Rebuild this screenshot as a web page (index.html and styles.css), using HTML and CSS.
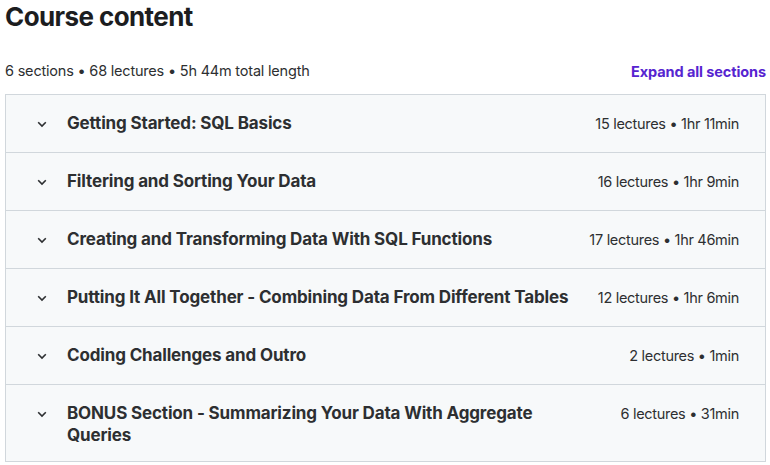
FILE: index.html
```html
<!DOCTYPE html>
<html lang="en">
<head>
<meta charset="utf-8">
<title>Course content</title>
<link rel="stylesheet" href="styles.css">
</head>
<body>
<div class="page">
  <h2 class="heading">Course content</h2>
  <div class="stats">
    <span class="stats-text">6 sections • 68 lectures • 5h 44m total length</span>
    <button class="expand">Expand all sections</button>
  </div>
  <div class="sections">
    <div class="section">
      <span class="chev"><svg width="12" height="12" viewBox="0 0 12 12"><path d="M2.2 4.2 6 8 9.8 4.2" fill="none" stroke="#2d2f31" stroke-width="1.6"/></svg></span>
      <span class="title">Getting Started: SQL Basics</span>
      <span class="meta">15 lectures • 1hr 11min</span>
    </div>
    <div class="section">
      <span class="chev"><svg width="12" height="12" viewBox="0 0 12 12"><path d="M2.2 4.2 6 8 9.8 4.2" fill="none" stroke="#2d2f31" stroke-width="1.6"/></svg></span>
      <span class="title">Filtering and Sorting Your Data</span>
      <span class="meta">16 lectures • 1hr 9min</span>
    </div>
    <div class="section">
      <span class="chev"><svg width="12" height="12" viewBox="0 0 12 12"><path d="M2.2 4.2 6 8 9.8 4.2" fill="none" stroke="#2d2f31" stroke-width="1.6"/></svg></span>
      <span class="title">Creating and Transforming Data With SQL Functions</span>
      <span class="meta">17 lectures • 1hr 46min</span>
    </div>
    <div class="section">
      <span class="chev"><svg width="12" height="12" viewBox="0 0 12 12"><path d="M2.2 4.2 6 8 9.8 4.2" fill="none" stroke="#2d2f31" stroke-width="1.6"/></svg></span>
      <span class="title">Putting It All Together - Combining Data From Different Tables</span>
      <span class="meta">12 lectures • 1hr 6min</span>
    </div>
    <div class="section">
      <span class="chev"><svg width="12" height="12" viewBox="0 0 12 12"><path d="M2.2 4.2 6 8 9.8 4.2" fill="none" stroke="#2d2f31" stroke-width="1.6"/></svg></span>
      <span class="title">Coding Challenges and Outro</span>
      <span class="meta">2 lectures • 1min</span>
    </div>
    <div class="section">
      <span class="chev"><svg width="12" height="12" viewBox="0 0 12 12"><path d="M2.2 4.2 6 8 9.8 4.2" fill="none" stroke="#2d2f31" stroke-width="1.6"/></svg></span>
      <span class="title">BONUS Section - Summarizing Your Data With Aggregate Queries</span>
      <span class="meta">6 lectures • 31min</span>
    </div>
  </div>
</div>
</body>
</html>
```
FILE: styles.css
```css
* { box-sizing: border-box; }
html, body { margin: 0; padding: 0; background: #ffffff; }
body {
  font-family: Inter, "Noto Sans", "Liberation Sans", sans-serif;
  color: #2d2f31;
}
.page {
  width: 770px;
  padding: 0 4px 0 5px;
}
.heading {
  margin: 0;
  font-size: 26px;
  font-weight: 700;
  line-height: 34px;
  letter-spacing: -0.6px;
  color: #1c1d1f;
}
.stats {
  display: flex;
  justify-content: space-between;
  align-items: center;
  margin-top: 26px;
  height: 22px;
  margin-bottom: 12px;
}
.stats-text {
  font-size: 14.5px;
  line-height: 22px;
  letter-spacing: -0.2px;
}
.expand {
  border: 0;
  background: none;
  padding: 0;
  font-family: inherit;
  font-size: 14.5px;
  font-weight: 700;
  color: #5624d0;
  letter-spacing: -0.1px;
  cursor: pointer;
}
.sections {
  border: 1px solid #d1d7dc;
  border-bottom: 0;
}
.section {
  display: flex;
  align-items: flex-start;
  background: #f7f9fa;
  border-bottom: 1px solid #d1d7dc;
  padding: 16px 26px 16px 30px;
}
.chev {
  flex: none;
  width: 12px;
  height: 25px;
  display: flex;
  align-items: center;
  margin-right: 19px;
}
.chev svg { display: block; }
.title {
  flex: 1;
  font-size: 17px;
  font-weight: 700;
  line-height: 22px;
  padding-top: 1px;
  margin-bottom: -1px;
  letter-spacing: -0.15px;
  margin-right: 24px;
}
.meta {
  flex: none;
  font-size: 14.5px;
  line-height: 25px;
  letter-spacing: -0.3px;
}
```
